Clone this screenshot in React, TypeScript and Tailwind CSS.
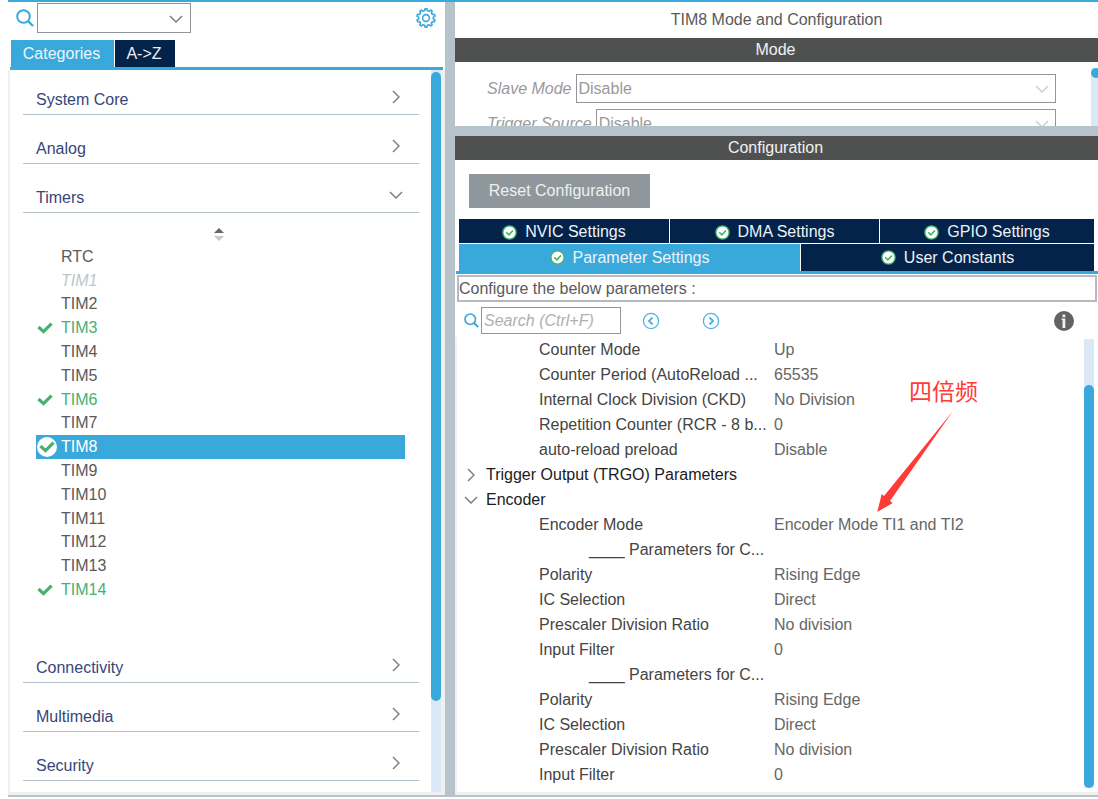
import type { ReactNode } from 'react';
import { clsx } from 'clsx';

function Chevron({ direction = 'down', className }: { direction?: 'down' | 'right'; className?: string }) {
  return direction === 'down' ? (
    <svg width="14" height="8" viewBox="0 0 14 8" fill="none" stroke="currentColor" strokeWidth="1.5" className={className}>
      <path d="M1 1l6 6 6-6" />
    </svg>
  ) : (
    <svg width="8" height="14" viewBox="0 0 8 14" fill="none" stroke="currentColor" strokeWidth="1.5" className={className}>
      <path d="M1 1l6 6-6 6" />
    </svg>
  );
}

function SearchIcon({ size }: { size: number }) {
  return (
    <svg width={size} height={size} viewBox="0 0 18 18" fill="none" stroke="#39a9dc" strokeWidth="2" className="shrink-0">
      <circle cx="7.5" cy="7.5" r="6.3" />
      <path d="M12 12l5 5" strokeWidth="2.4" />
    </svg>
  );
}

function gearPath() {
  const teeth = 10;
  const points: string[] = [];
  for (let i = 0; i < teeth; i++) {
    const steps: [number, number][] = [[-0.3, 7.4], [-0.17, 9.2], [0.17, 9.2], [0.3, 7.4]];
    for (const [offset, radius] of steps) {
      const angle = ((i + offset) / teeth) * Math.PI * 2 - Math.PI / 2;
      points.push(`${(10 + radius * Math.cos(angle)).toFixed(2)} ${(10 + radius * Math.sin(angle)).toFixed(2)}`);
    }
  }
  return `M${points.join('L')}Z`;
}

function GearIcon() {
  return (
    <svg width="20" height="20" viewBox="0 0 20 20" fill="none" stroke="#39a9dc" strokeWidth="1.6" strokeLinejoin="round">
      <path d={gearPath()} />
      <circle cx="10" cy="10" r="3.4" />
    </svg>
  );
}

function CheckMark() {
  return (
    <svg width="16" height="12" viewBox="0 0 16 12" fill="none" stroke="#46b072" strokeWidth="3.2">
      <path d="M1.5 5l5 4.6L14.6 1.6" />
    </svg>
  );
}

function StatusIcon() {
  return (
    <svg width="15" height="15" viewBox="0 0 15 15" fill="none">
      <circle cx="7.5" cy="7.5" r="6.6" fill="#fff" stroke="#46b072" strokeWidth="1.4" />
      <path d="M4.2 7.3l2.6 2.6 4.2-4.4" stroke="#46b072" strokeWidth="1.6" />
    </svg>
  );
}

function CircleArrow({ direction }: { direction: 'left' | 'right' }) {
  return (
    <svg width="18" height="18" viewBox="0 0 18 18" fill="none" stroke="#4fb3e2">
      <circle cx="9" cy="9" r="7.6" strokeWidth="1.3" />
      <path d={direction === 'left' ? 'M10.5 5.5L7 9l3.5 3.5' : 'M7.5 5.5L11 9l-3.5 3.5'} strokeWidth="1.9" />
    </svg>
  );
}

function InfoIcon() {
  return (
    <svg width="20" height="20" viewBox="0 0 20 20">
      <circle cx="10" cy="10" r="10" fill="#636363" />
      <path d="M8.5 3.6h2.8v2.6H8.500zM7.600 7.600h3.700v9.400H8.500V9H7.600z" fill="#f0f0f0" />
    </svg>
  );
}

type Peripheral = { name: string; state?: 'enabled' | 'blocked' | 'selected' };

const timers: Peripheral[] = [
  { name: 'RTC' },
  { name: 'TIM1', state: 'blocked' },
  { name: 'TIM2' },
  { name: 'TIM3', state: 'enabled' },
  { name: 'TIM4' },
  { name: 'TIM5' },
  { name: 'TIM6', state: 'enabled' },
  { name: 'TIM7' },
  { name: 'TIM8', state: 'selected' },
  { name: 'TIM9' },
  { name: 'TIM10' },
  { name: 'TIM11' },
  { name: 'TIM12' },
  { name: 'TIM13' },
  { name: 'TIM14', state: 'enabled' },
];

type Row = { label: string; value?: string; kind?: 'closed' | 'open' | 'heading' };

const channelRows: Row[] = [
  { label: '____ Parameters for C...', kind: 'heading' },
  { label: 'Polarity', value: 'Rising Edge' },
  { label: 'IC Selection', value: 'Direct' },
  { label: 'Prescaler Division Ratio', value: 'No division' },
  { label: 'Input Filter', value: '0' },
];

const rows: Row[] = [
  { label: 'Counter Mode', value: 'Up' },
  { label: 'Counter Period (AutoReload ...', value: '65535' },
  { label: 'Internal Clock Division (CKD)', value: 'No Division' },
  { label: 'Repetition Counter (RCR - 8 b...', value: '0' },
  { label: 'auto-reload preload', value: 'Disable' },
  { label: 'Trigger Output (TRGO) Parameters', kind: 'closed' },
  { label: 'Encoder', kind: 'open' },
  { label: 'Encoder Mode', value: 'Encoder Mode TI1 and TI2' },
  ...channelRows,
  ...channelRows,
];

function Category({ name, open }: { name: string; open?: boolean }) {
  return (
    <button
      type="button"
      aria-expanded={!!open}
      className="flex h-[49px] shrink-0 items-end justify-between border-b border-[#b7c3ca] pl-[13px] pb-1 text-left text-[#37467a]"
    >
      <span className="leading-5">{name}</span>
      <span className="flex h-[26px] w-[46px] items-center justify-center text-[#808080]">
        <Chevron direction={open ? 'down' : 'right'} />
      </span>
    </button>
  );
}

function TimerItem({ name, state }: Peripheral) {
  return (
    <li className="flex min-h-0 flex-1">
      <button
        type="button"
        className={clsx(
          'flex w-full items-center text-left',
          !state && 'text-[#5a5a5a]',
          state === 'blocked' && 'italic text-[#c0c6ca]',
          state === 'enabled' && 'text-[#46b072]',
          state === 'selected' && 'bg-[#39a9dc] text-white',
        )}
      >
        <span className="flex w-[25px] justify-start pl-px">
          {state === 'enabled' && <CheckMark />}
          {state === 'selected' && (
            <span className="flex size-5 shrink-0 items-center justify-center rounded-full bg-white">
              <CheckMark />
            </span>
          )}
        </span>
        {name}
      </button>
    </li>
  );
}

function Sidebar() {
  return (
    <aside className="flex w-[437px] shrink-0 flex-col">
      <div className="flex h-[36px] shrink-0 items-center pr-[9px] pb-1 pl-2">
        <SearchIcon size={18} />
        <div className="relative ml-[3px]">
          <select aria-label="Search peripherals" className="block h-[30px] w-[154px] appearance-none border border-[#8f979d] bg-white px-1">
            <option></option>
          </select>
          <Chevron className="pointer-events-none absolute top-3 right-2 text-[#808080]" />
        </div>
        <button type="button" aria-label="Settings" className="ml-auto">
          <GearIcon />
        </button>
      </div>
      <div role="tablist" className="mx-[2px] flex h-[32px] shrink-0 items-end gap-px border-b-3 border-[#39a9dc] pl-px">
        <button type="button" role="tab" aria-selected="true" className="h-[27px] w-[103px] bg-[#39a9dc] pr-[2px] text-[#eef7fc]">
          Categories
        </button>
        <button type="button" role="tab" aria-selected="false" className="h-[27px] w-[60px] bg-[#03234b] pr-[2px] text-[#eceff3]">
          A-&gt;Z
        </button>
      </div>
      <div className="flex min-h-0 flex-1 border-r-4 border-b-3 border-l-2 border-[#f0f0f0]">
        <div className="flex min-w-0 flex-1 flex-col overflow-hidden pr-3 pl-[13px]">
          <div className="-mt-1 flex flex-col">
            <Category name="System Core" />
            <Category name="Analog" />
            <Category name="Timers" open />
          </div>
          <div className="h-[421px] shrink-0 pr-[14px] pl-[13px]">
            <div className="flex h-8 items-end justify-center pr-[3px] pb-1">
              <svg width="10" height="13" viewBox="0 0 10 13">
                <path d="M5 0l5 5H0z" fill="#666" />
                <path d="M5 13l5-5H0z" fill="#c8c8c8" />
              </svg>
            </div>
            <ul className="flex h-[357px] flex-col">
              {timers.map((timer) => (
                <TimerItem key={timer.name} {...timer} />
              ))}
            </ul>
          </div>
          <Category name="Connectivity" />
          <Category name="Multimedia" />
          <Category name="Security" />
        </div>
        <div className="w-[10px] bg-[#dae9f5] pt-[2px]">
          <div className="h-[629px] rounded-full bg-[#39a9dc]" />
        </div>
      </div>
    </aside>
  );
}

function ModeField({ id, label }: { id: string; label: string }) {
  return (
    <div className="flex items-center gap-1">
      <label htmlFor={id} className="italic">
        {label}
      </label>
      <div className="relative flex-1">
        <select id={id} className="block h-[29px] w-full appearance-none border border-[#8f979d] bg-white px-[2px]">
          <option>Disable</option>
        </select>
        <Chevron className="pointer-events-none absolute top-[11px] right-[7px] text-[#cfcfcf]" />
      </div>
    </div>
  );
}

function Tab({ selected, className, children }: { selected?: boolean; className?: string; children: ReactNode }) {
  return (
    <button
      type="button"
      role="tab"
      aria-selected={!!selected}
      className={clsx(
        'flex items-center justify-center gap-2 text-[#eef2f6]',
        selected ? 'bg-[#39a9dc]' : 'bg-[#03234b]',
        className,
      )}
    >
      <StatusIcon />
      {children}
    </button>
  );
}

function ParameterRow({ label, value, kind }: Row) {
  if (kind === 'open' || kind === 'closed') {
    return (
      <tr className="h-[25px]">
        <th colSpan={2} className="p-0 text-left font-normal text-[#1c1c1c]">
          <button type="button" aria-expanded={kind === 'open'} className="flex items-center pl-[7px]">
            <span className="flex w-[22px] text-[#808080]">
              <Chevron direction={kind === 'open' ? 'down' : 'right'} className={kind === 'closed' ? 'ml-[3px]' : undefined} />
            </span>
            {label}
          </button>
        </th>
      </tr>
    );
  }
  return (
    <tr className="h-[25px]">
      <th className={clsx('p-0 text-left font-normal whitespace-nowrap text-[#444]', kind === 'heading' ? 'pl-[132px]' : 'pl-[82px]')}>
        {label}
      </th>
      <td className="p-0 text-[#666]">{value}</td>
    </tr>
  );
}

function Annotation() {
  return (
    <div className="pointer-events-none absolute top-[37px] left-[420px] text-[#ff3b36]">
      <p className="pl-[32px] font-['Noto_Sans_CJK_SC',sans-serif] text-[23px] leading-8">四倍频</p>
      <svg width="78" height="104" viewBox="0 0 78 104" fill="currentColor" className="mt-[5px]">
        <path d="M76 0L7 85 4.700 83 0.300 101 15.700 92 13 90z" />
      </svg>
    </div>
  );
}

function ConfigurationPanel() {
  return (
    <main className="flex min-w-0 flex-1 flex-col">
      <h1 className="flex h-9 shrink-0 items-center justify-center text-[#5a5a5a]">TIM8 Mode and Configuration</h1>
      <h2 className="flex h-6 shrink-0 items-center justify-center bg-[#4f5150] pr-[2px] text-[#f2f2f2]">Mode</h2>
      <section className="flex h-[64px] shrink-0 overflow-hidden">
        <div className="flex flex-1 flex-col gap-[6px] pt-3 pr-[35px] pl-8 text-[#9a9a9a]">
          <ModeField id="slave-mode" label="Slave Mode" />
          <ModeField id="trigger-source" label="Trigger Source" />
        </div>
        <div className="mt-[6px] h-full w-[7px] overflow-hidden bg-[#dae9f5]">
          <div className="size-[10px] rounded-full bg-[#39a9dc]" />
        </div>
      </section>
      <div className="h-[10px] shrink-0 bg-[#b7c3ca]" />
      <h2 className="flex h-6 shrink-0 items-center justify-center bg-[#4f5150] pr-[2px] text-[#f2f2f2]">Configuration</h2>
      <div className="px-[14px] pt-[14px] pb-[11px]">
        <button type="button" className="h-[34px] w-[181px] bg-[#8f979d] text-[#f0f0f0]">
          Reset Configuration
        </button>
      </div>
      <div role="tablist" className="ml-px shrink-0 border-b-3 border-[#39a9dc] pr-1 pl-[3px]">
        <div className="mb-px flex h-6 gap-px">
          <Tab className="w-[210px] pt-[2px]">NVIC Settings</Tab>
          <Tab className="w-[209px] pt-[2px]">DMA Settings</Tab>
          <Tab className="flex-1 pt-[2px]">GPIO Settings</Tab>
        </div>
        <div className="flex h-[27px] gap-px">
          <Tab selected className="w-[341px]">Parameter Settings</Tab>
          <Tab className="flex-1">User Constants</Tab>
        </div>
      </div>
      <p className="mt-px mr-px ml-[2px] h-[27px] shrink-0 border-2 border-[#b4babf] leading-[23px] text-[#5a5a5a]">
        Configure the below parameters :
      </p>
      <div className="flex h-[35px] shrink-0 items-center pt-[2px] pr-6 pl-[9px]">
        <SearchIcon size={15} />
        <input
          type="text"
          aria-label="Search parameters"
          placeholder="Search (Ctrl+F)"
          className="ml-[2px] h-[27px] w-[140px] border border-[#8f979d] px-[2px] placeholder:text-[#b0b0b0] placeholder:italic"
        />
        <button type="button" aria-label="Previous match" className="ml-[21px]">
          <CircleArrow direction="left" />
        </button>
        <button type="button" aria-label="Next match" className="ml-[42px]">
          <CircleArrow direction="right" />
        </button>
        <button type="button" aria-label="Information" className="ml-auto rounded-full">
          <InfoIcon />
        </button>
      </div>
      <section className="relative flex min-h-0 flex-1 border-b-3 border-l-2 border-[#f0f0f0] pr-1">
        <div className="min-w-0 flex-1 overflow-hidden">
          <table className="w-full table-fixed border-collapse">
            <colgroup>
              <col className="w-[317px]" />
              <col />
            </colgroup>
            <tbody>
              {rows.map((row, index) => (
                <ParameterRow key={index} {...row} />
              ))}
            </tbody>
          </table>
        </div>
        <div className="mt-[2px] mb-1 w-[10px] bg-[#dae9f5] pt-[46px]">
          <div className="h-full rounded-full bg-[#39a9dc]" />
        </div>
        <Annotation />
      </section>
    </main>
  );
}

export default function App() {
  return (
    <div className="h-screen min-h-[600px] bg-white pb-[2px] pl-2 font-['Liberation_Sans',Arial,sans-serif] text-base leading-5">
      <div className="flex h-full overflow-hidden border-t-2 border-b-2 border-t-[#39a9dc] border-b-[#b7c3ca]">
        <Sidebar />
        <div className="w-[10px] shrink-0 bg-[#b7c3ca]" />
        <ConfigurationPanel />
      </div>
    </div>
  );
}
